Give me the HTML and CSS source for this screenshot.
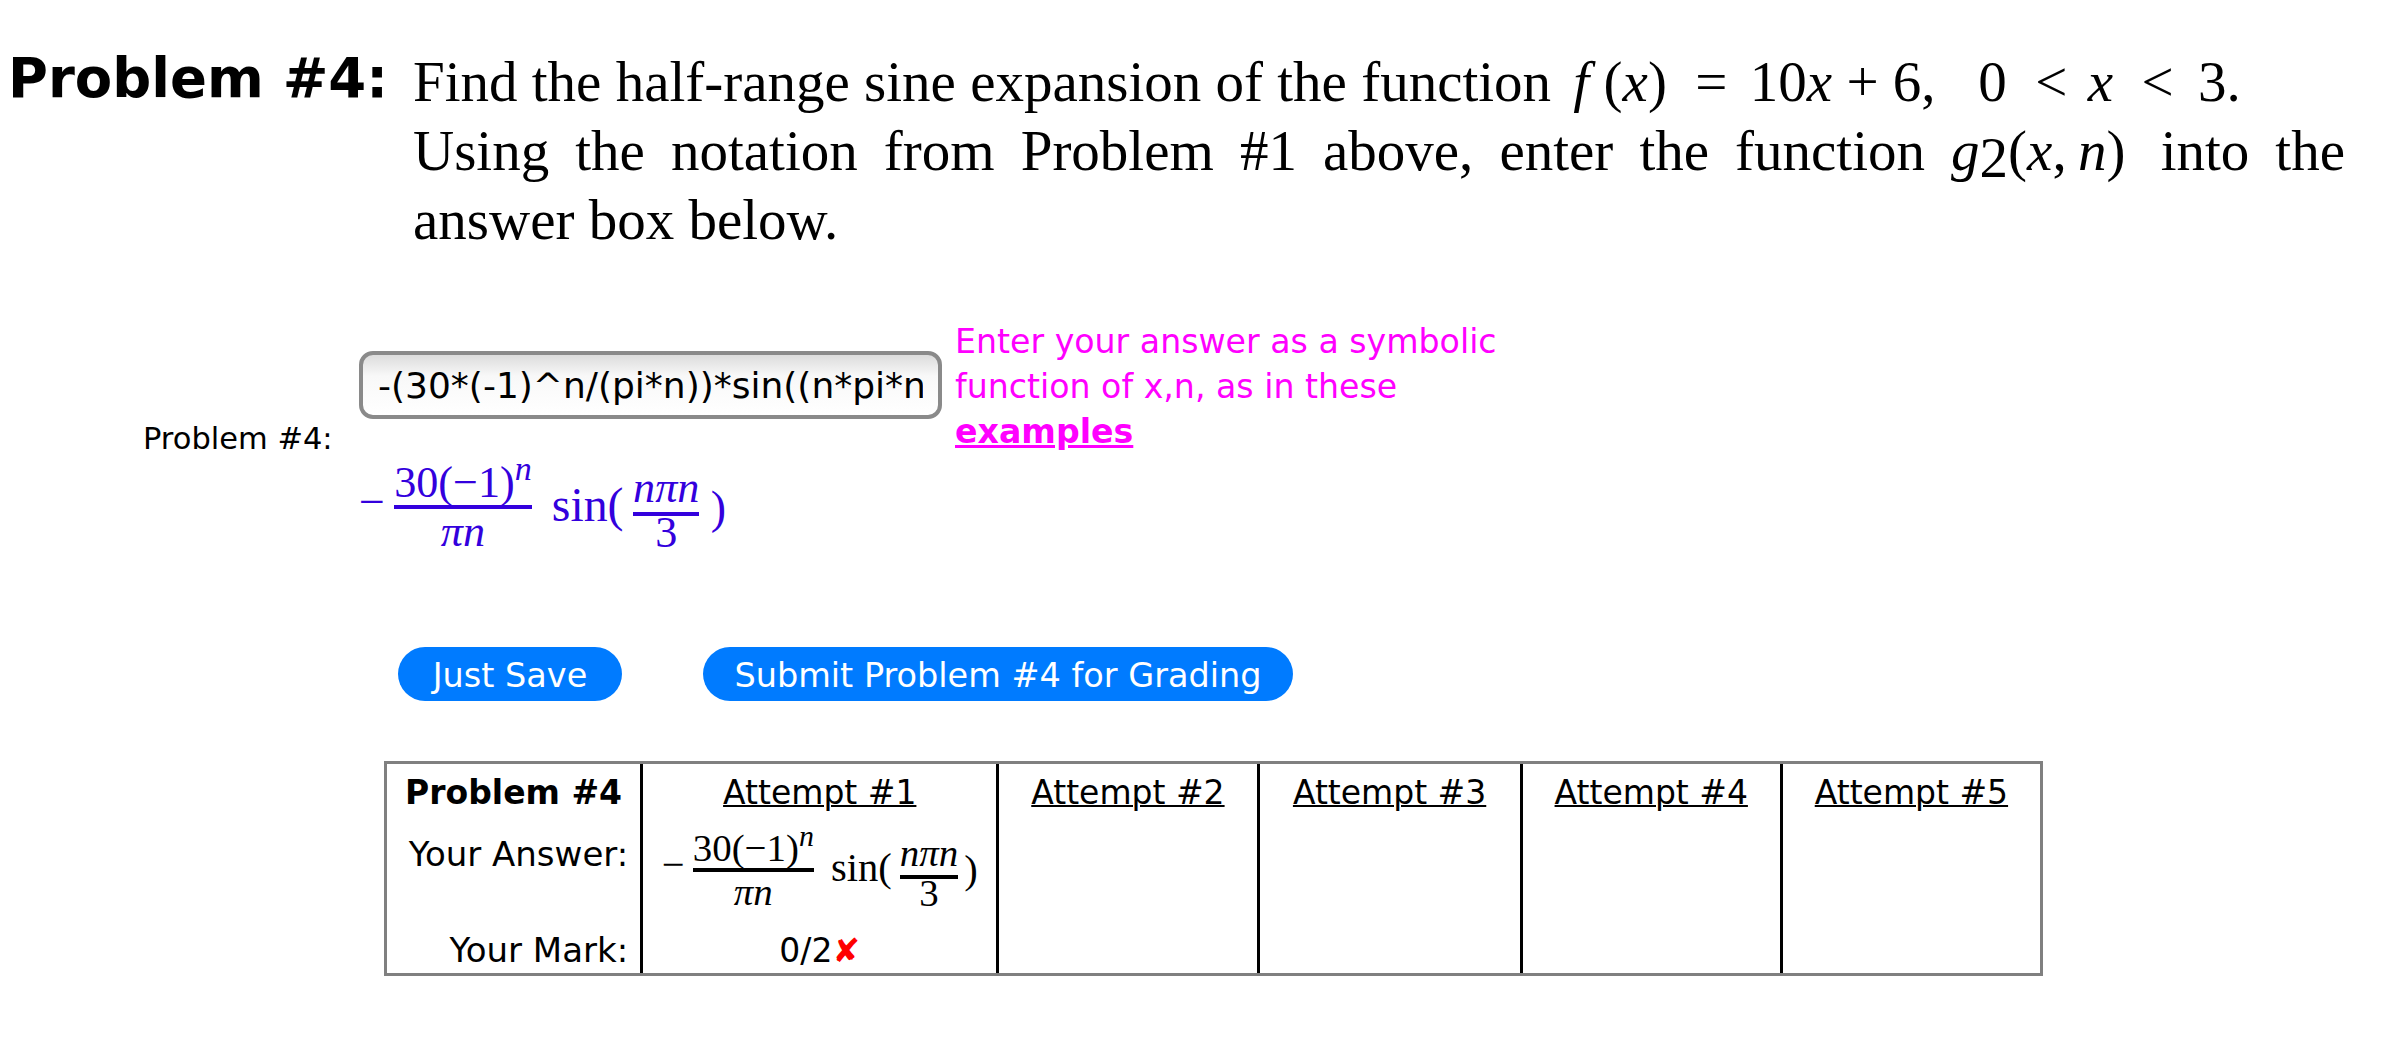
FILE: index.html
```html
<!DOCTYPE html>
<html lang="en">
<head>
  <meta charset="UTF-8" />
  <title>Problem #4</title>
  <link rel="stylesheet" href="styles.css">
</head>
<body>
  <div class="problem">
    <div class="problem-name">Problem #4:</div>
    <div class="problem-text">
      Find the half-range sine expansion of the function <i class="fx">f</i>&#8201;(<i>x</i>) <span class="eq">=</span>&nbsp; 10<i>x</i> + 6, &nbsp;&nbsp;0 &nbsp;&lt; <i class="gap-x">x</i> &nbsp;&lt; <span class="gap-end">3.</span><br />
      Using the notation from Problem #1 above, enter the function <span class="gfn"><i>g</i><span class="low">2</span>(<i>x</i>,&#8201;<i>n</i>)</span> into the answer box below.
    </div>
  </div>

  <div class="answer-row">
    <label class="answer-label" for="answer">Problem #4:</label>
    <div class="answer-col">
      <input class="answer-input" id="answer" type="text" value="-(30*(-1)^n/(pi*n))*sin((n*pi*n)/3)" />
      <div class="math preview">
        <span class="minus">&minus;</span>
        <span class="frac">
          <span class="num">30(&minus;1)<sup><i>n</i></sup></span>
          <span class="den"><i>&pi;n</i></span>
        </span>
        <span class="fn">sin(</span>
        <span class="frac small">
          <span class="num"><i>n&pi;n</i></span>
          <span class="den">3</span>
        </span>
        <span class="close">)</span>
      </div>
    </div>
    <div class="hint">
      Enter your answer as a symbolic<br />
      function of x,n, as in these<br />
      <a href="#">examples</a>
    </div>
  </div>

  <div class="buttons">
    <button type="button" class="btn btn-save">Just Save</button>
    <button type="button" class="btn btn-submit">Submit Problem #4 for Grading</button>
  </div>

  <table class="attempts">
    <colgroup>
      <col class="c-label" />
      <col class="c-first" />
      <col class="c-a" />
      <col class="c-b" />
      <col class="c-a" />
      <col class="c-a" />
    </colgroup>
    <tr class="row-head">
      <th>Problem #4</th>
      <td><u>Attempt #1</u></td>
      <td><u>Attempt #2</u></td>
      <td><u>Attempt #3</u></td>
      <td><u>Attempt #4</u></td>
      <td><u>Attempt #5</u></td>
    </tr>
    <tr class="row-answer">
      <th class="side">Your Answer:</th>
      <td class="answer-cell">
        <div class="math recorded">
          <span class="minus">&minus;</span>
          <span class="frac">
            <span class="num">30(&minus;1)<sup><i>n</i></sup></span>
            <span class="den"><i>&pi;n</i></span>
          </span>
          <span class="fn">sin(</span>
          <span class="frac small">
            <span class="num"><i>n&pi;n</i></span>
            <span class="den">3</span>
          </span>
          <span class="close">)</span>
        </div>
      </td>
      <td></td><td></td><td></td><td></td>
    </tr>
    <tr class="row-mark">
      <th class="side">Your Mark:</th>
      <td>0/2<span class="cross">&#10008;</span></td>
      <td></td><td></td><td></td><td></td>
    </tr>
  </table>
</body>
</html>
```

FILE: styles.css
```css
body {
  margin: 0;
  background-color: #fff;
  color: #000;
  font-family: "DejaVu Sans", sans-serif;
}

.problem {
  display: flex;
  padding: 44px 0 0 8px;
}
.problem-name {
  width: 405px;
  font-size: 54.5px;
  font-weight: bold;
  line-height: 69px;
}
.problem-text {
  width: 1932px;
  padding-top: 3px;
  font-family: "Liberation Serif", serif;
  font-size: 57px;
  line-height: 69px;
  text-align: justify;
}
.fx { margin: 0 3px 0 8px; }
.eq { margin: 0 -6px 0 14px; }
.gap-x { margin-left: 6px; }
.gap-end { margin-left: 10px; }
.gfn {
  display: inline-block;
  margin-right: 9px;
}
.low {
  position: relative;
  top: 7px;
}

.answer-row {
  display: flex;
  margin-top: 64px;
  padding-left: 143px;
}
.answer-label {
  align-self: center;
  width: 216px;
  padding-top: 4px;
  font-size: 30.5px;
}
.answer-col {
  width: 583px;
  padding-top: 33px;
}
.answer-input {
  display: block;
  box-sizing: border-box;
  width: 583px;
  height: 68px;
  padding: 0 15px;
  border: 4px solid #8a8a8a;
  border-radius: 14px;
  background: linear-gradient(#dcdcdc, #f8f8f8 35%, #fff);
  font-family: "DejaVu Sans", sans-serif;
  font-size: 36px;
  color: #000;
}
.hint {
  margin: 1px 0 0 13px;
  color: #f0f;
  font-size: 33.2px;
  line-height: 45px;
}
.hint a {
  color: #f0f;
  font-weight: bold;
}

.math {
  display: inline-flex;
  align-items: center;
  font-family: "Liberation Serif", serif;
  line-height: 1;
}
.preview {
  display: flex;
  margin-top: 41px;
  font-size: 46px;
  color: #3300dd;
}
.recorded {
  font-size: 40.5px;
}
.minus {
  margin: 0 0.2em 0.25em 0;
}
.frac {
  display: inline-flex;
  flex-direction: column;
  align-items: center;
  font-size: 0.96em;
}
.frac.small {
  margin-top: 0.14em;
}
.num {
  align-self: stretch;
  border-bottom: 4px solid currentColor;
  text-align: center;
  white-space: nowrap;
}
.den {
  padding-top: 1px;
}
.small .num {
  padding-bottom: 2px;
}
.small .den {
  margin-top: -5px;
  padding-top: 0;
}
sup {
  font-size: 0.77em;
  line-height: 0;
  vertical-align: 0.5em;
}
.fn {
  margin: 0 0.2em 0.1em 0.42em;
  font-size: 1.04em;
}
.recorded .fn {
  font-size: 1em;
}
.close {
  margin-left: 0.25em;
}
.recorded .close {
  margin-left: 0.15em;
}

.buttons {
  display: flex;
  gap: 81px;
  margin-top: 92px;
  padding-left: 398px;
}
.btn {
  height: 54px;
  padding: 3px 0 0;
  border: none;
  border-radius: 27px;
  background-color: #007bff;
  color: #fff;
  font-family: "DejaVu Sans", sans-serif;
  font-size: 33.5px;
}
.btn-save { width: 224px; }
.btn-submit { width: 590px; }

.attempts {
  box-sizing: border-box;
  width: 1659px;
  margin: 60px 0 0 384px;
  border: 3px solid #808080;
  border-spacing: 0;
  table-layout: fixed;
  font-size: 33px;
}
.c-label { width: 253px; }
.c-first { width: 356px; }
.c-a { width: 260px; }
.c-b { width: 263px; }
.attempts td,
.attempts th {
  padding: 0;
  text-align: center;
  font-weight: normal;
}
.attempts td {
  border-left: 3px solid #000;
}
.attempts u {
  text-decoration-thickness: 2px;
}
.attempts th.side {
  padding-right: 12px;
  text-align: right;
  font-size: 34px;
}
.row-head th {
  font-weight: bold;
}
.row-head { height: 58px; }
.row-head th,
.row-head td {
  padding-top: 9px;
  vertical-align: top;
}
.row-answer { height: 84px; }
.row-answer th.side {
  padding-top: 12px;
  vertical-align: top;
}
.answer-cell {
  padding-top: 6px !important;
}
.row-mark { height: 60px; }
.row-mark th,
.row-mark td {
  padding-bottom: 3px;
  vertical-align: bottom;
}
.cross {
  color: #f00;
  font-weight: bold;
}
```
